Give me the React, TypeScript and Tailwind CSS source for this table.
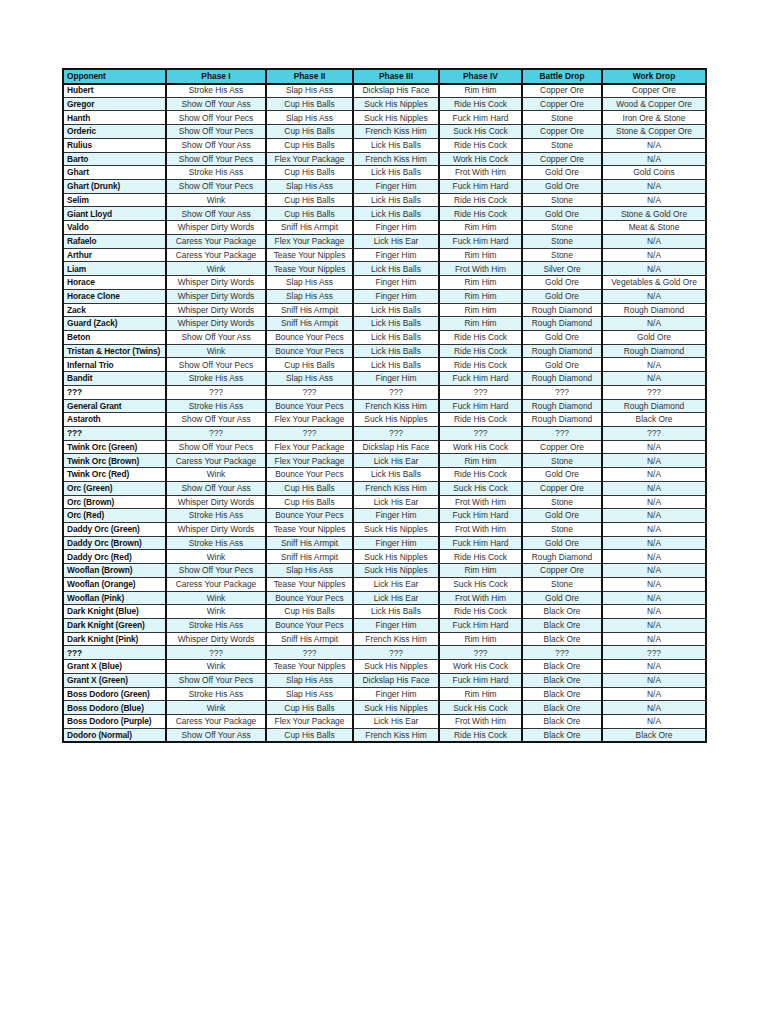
import React from 'react';

type Row = [string, string, string, string, string, string, string];

const headers = ['Opponent', 'Phase I', 'Phase II', 'Phase III', 'Phase IV', 'Battle Drop', 'Work Drop'];
const widths = [103, 100, 87, 86, 83, 80, 104];

const Q: Row = ['???', '???', '???', '???', '???', '???', '???'];

const rows: Row[] = [
  ['Hubert', 'Stroke His Ass', 'Slap His Ass', 'Dickslap His Face', 'Rim Him', 'Copper Ore', 'Copper Ore'],
  ['Gregor', 'Show Off Your Ass', 'Cup His Balls', 'Suck His Nipples', 'Ride His Cock', 'Copper Ore', 'Wood & Copper Ore'],
  ['Hanth', 'Show Off Your Pecs', 'Slap His Ass', 'Suck His Nipples', 'Fuck Him Hard', 'Stone', 'Iron Ore & Stone'],
  ['Orderic', 'Show Off Your Pecs', 'Cup His Balls', 'French Kiss Him', 'Suck His Cock', 'Copper Ore', 'Stone & Copper Ore'],
  ['Rulius', 'Show Off Your Ass', 'Cup His Balls', 'Lick His Balls', 'Ride His Cock', 'Stone', 'N/A'],
  ['Barto', 'Show Off Your Pecs', 'Flex Your Package', 'French Kiss Him', 'Work His Cock', 'Copper Ore', 'N/A'],
  ['Ghart', 'Stroke His Ass', 'Cup His Balls', 'Lick His Balls', 'Frot With Him', 'Gold Ore', 'Gold Coins'],
  ['Ghart (Drunk)', 'Show Off Your Pecs', 'Slap His Ass', 'Finger Him', 'Fuck Him Hard', 'Gold Ore', 'N/A'],
  ['Selim', 'Wink', 'Cup His Balls', 'Lick His Balls', 'Ride His Cock', 'Stone', 'N/A'],
  ['Giant Lloyd', 'Show Off Your Ass', 'Cup His Balls', 'Lick His Balls', 'Ride His Cock', 'Gold Ore', 'Stone & Gold Ore'],
  ['Valdo', 'Whisper Dirty Words', 'Sniff His Armpit', 'Finger Him', 'Rim Him', 'Stone', 'Meat & Stone'],
  ['Rafaelo', 'Caress Your Package', 'Flex Your Package', 'Lick His Ear', 'Fuck Him Hard', 'Stone', 'N/A'],
  ['Arthur', 'Caress Your Package', 'Tease Your Nipples', 'Finger Him', 'Rim Him', 'Stone', 'N/A'],
  ['Liam', 'Wink', 'Tease Your Nipples', 'Lick His Balls', 'Frot With Him', 'Silver Ore', 'N/A'],
  ['Horace', 'Whisper Dirty Words', 'Slap His Ass', 'Finger Him', 'Rim Him', 'Gold Ore', 'Vegetables & Gold Ore'],
  ['Horace Clone', 'Whisper Dirty Words', 'Slap His Ass', 'Finger Him', 'Rim Him', 'Gold Ore', 'N/A'],
  ['Zack', 'Whisper Dirty Words', 'Sniff His Armpit', 'Lick His Balls', 'Rim Him', 'Rough Diamond', 'Rough Diamond'],
  ['Guard (Zack)', 'Whisper Dirty Words', 'Sniff His Armpit', 'Lick His Balls', 'Rim Him', 'Rough Diamond', 'N/A'],
  ['Beton', 'Show Off Your Ass', 'Bounce Your Pecs', 'Lick His Balls', 'Ride His Cock', 'Gold Ore', 'Gold Ore'],
  ['Tristan & Hector (Twins)', 'Wink', 'Bounce Your Pecs', 'Lick His Balls', 'Ride His Cock', 'Rough Diamond', 'Rough Diamond'],
  ['Infernal Trio', 'Show Off Your Pecs', 'Cup His Balls', 'Lick His Balls', 'Ride His Cock', 'Gold Ore', 'N/A'],
  ['Bandit', 'Stroke His Ass', 'Slap His Ass', 'Finger Him', 'Fuck Him Hard', 'Rough Diamond', 'N/A'],
  Q,
  ['General Grant', 'Stroke His Ass', 'Bounce Your Pecs', 'French Kiss Him', 'Fuck Him Hard', 'Rough Diamond', 'Rough Diamond'],
  ['Astaroth', 'Show Off Your Ass', 'Flex Your Package', 'Suck His Nipples', 'Ride His Cock', 'Rough Diamond', 'Black Ore'],
  Q,
  ['Twink Orc (Green)', 'Show Off Your Pecs', 'Flex Your Package', 'Dickslap His Face', 'Work His Cock', 'Copper Ore', 'N/A'],
  ['Twink Orc (Brown)', 'Caress Your Package', 'Flex Your Package', 'Lick His Ear', 'Rim Him', 'Stone', 'N/A'],
  ['Twink Orc (Red)', 'Wink', 'Bounce Your Pecs', 'Lick His Balls', 'Ride His Cock', 'Gold Ore', 'N/A'],
  ['Orc (Green)', 'Show Off Your Ass', 'Cup His Balls', 'French Kiss Him', 'Suck His Cock', 'Copper Ore', 'N/A'],
  ['Orc (Brown)', 'Whisper Dirty Words', 'Cup His Balls', 'Lick His Ear', 'Frot With Him', 'Stone', 'N/A'],
  ['Orc (Red)', 'Stroke His Ass', 'Bounce Your Pecs', 'Finger Him', 'Fuck Him Hard', 'Gold Ore', 'N/A'],
  ['Daddy Orc (Green)', 'Whisper Dirty Words', 'Tease Your Nipples', 'Suck His Nipples', 'Frot With Him', 'Stone', 'N/A'],
  ['Daddy Orc (Brown)', 'Stroke His Ass', 'Sniff His Armpit', 'Finger Him', 'Fuck Him Hard', 'Gold Ore', 'N/A'],
  ['Daddy Orc (Red)', 'Wink', 'Sniff His Armpit', 'Suck His Nipples', 'Ride His Cock', 'Rough Diamond', 'N/A'],
  ['Wooflan (Brown)', 'Show Off Your Pecs', 'Slap His Ass', 'Suck His Nipples', 'Rim Him', 'Copper Ore', 'N/A'],
  ['Wooflan (Orange)', 'Caress Your Package', 'Tease Your Nipples', 'Lick His Ear', 'Suck His Cock', 'Stone', 'N/A'],
  ['Wooflan (Pink)', 'Wink', 'Bounce Your Pecs', 'Lick His Ear', 'Frot With Him', 'Gold Ore', 'N/A'],
  ['Dark Knight (Blue)', 'Wink', 'Cup His Balls', 'Lick His Balls', 'Ride His Cock', 'Black Ore', 'N/A'],
  ['Dark Knight (Green)', 'Stroke His Ass', 'Bounce Your Pecs', 'Finger Him', 'Fuck Him Hard', 'Black Ore', 'N/A'],
  ['Dark Knight (Pink)', 'Whisper Dirty Words', 'Sniff His Armpit', 'French Kiss Him', 'Rim Him', 'Black Ore', 'N/A'],
  Q,
  ['Grant X (Blue)', 'Wink', 'Tease Your Nipples', 'Suck His Nipples', 'Work His Cock', 'Black Ore', 'N/A'],
  ['Grant X (Green)', 'Show Off Your Pecs', 'Slap His Ass', 'Dickslap His Face', 'Fuck Him Hard', 'Black Ore', 'N/A'],
  ['Boss Dodoro (Green)', 'Stroke His Ass', 'Slap His Ass', 'Finger Him', 'Rim Him', 'Black Ore', 'N/A'],
  ['Boss Dodoro (Blue)', 'Wink', 'Cup His Balls', 'Suck His Nipples', 'Suck His Cock', 'Black Ore', 'N/A'],
  ['Boss Dodoro (Purple)', 'Caress Your Package', 'Flex Your Package', 'Lick His Ear', 'Frot With Him', 'Black Ore', 'N/A'],
  ['Dodoro (Normal)', 'Show Off Your Ass', 'Cup His Balls', 'French Kiss Him', 'Ride His Cock', 'Black Ore', 'Black Ore'],
];

export default function App() {
  return (
    <div className="min-h-[1024px] w-[768px] bg-white pl-[62px] pt-[68px] font-['Liberation_Sans',Arial,sans-serif]">
      <table className="table-fixed border-collapse border-2 border-[#111] w-[644px] text-[8.4px] leading-none">
        <colgroup>
          {widths.map((w, i) => (
            <col key={i} style={{ width: w }} />
          ))}
        </colgroup>
        <thead>
          <tr className="h-[14.5px] bg-[#4fcfe1]">
            {headers.map((h, i) => (
              <th
                key={h}
                className={`border-x-2 border-b-2 border-[#111] font-bold text-[#111] p-0 ${
                  i === 0 ? 'text-left pl-[3px] tracking-[-0.1px]' : 'text-center'
                }`}
              >
                {h}
              </th>
            ))}
          </tr>
        </thead>
        <tbody>
          {rows.map((r, ri) => (
            <tr key={ri} className={`h-[13.72px] ${ri % 2 === 1 ? 'bg-[#def5f9]' : 'bg-white'}`}>
              {r.map((c, ci) => (
                <td
                  key={ci}
                  className={`border-x-2 border-y border-x-[#111] border-y-[#333] p-0 whitespace-nowrap ${
                    ci === 0
                      ? 'text-left pl-[3px] tracking-[-0.1px] font-bold text-[#111]'
                      : 'text-center text-[#333]'
                  }`}
                >
                  {c}
                </td>
              ))}
            </tr>
          ))}
        </tbody>
      </table>
    </div>
  );
}
